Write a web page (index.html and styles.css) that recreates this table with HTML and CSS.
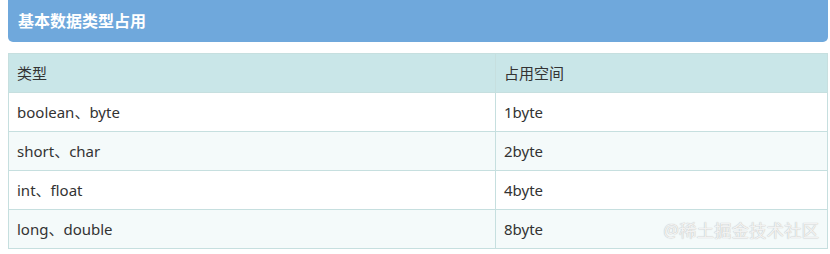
FILE: index.html
```html
<!DOCTYPE html>
<html lang="zh">
<head>
<meta charset="utf-8">
<link rel="stylesheet" href="styles.css">
</head>
<body>
<div class="page">
  <div class="title">基本数据类型占用</div>
  <table class="tbl">
    <thead>
      <tr><th class="c1">类型</th><th>占用空间</th></tr>
    </thead>
    <tbody>
      <tr><td>boolean、byte</td><td>1byte</td></tr>
      <tr class="alt"><td>short、char</td><td>2byte</td></tr>
      <tr><td>int、float</td><td>4byte</td></tr>
      <tr class="alt"><td>long、double</td><td>8byte</td></tr>
    </tbody>
  </table>
  <div class="wm">@稀土掘金技术社区</div>
</div>
</body>
</html>
```
FILE: styles.css
```css
html, body { margin: 0; padding: 0; background: #fff; }
body {
  font-family: "Noto Sans", "Noto Sans CJK SC", sans-serif;
  color: #333;
}
.page {
  position: relative;
  width: 820px;
  margin: 0 0 0 8px;
}
.title {
  height: 42px;
  box-sizing: border-box;
  background: #6fa8dc;
  border-radius: 0 0 5px 5px;
  color: #fff;
  font-weight: bold;
  font-size: 16px;
  line-height: 42px;
  padding-left: 10px;
  margin-bottom: 11px;
}
.tbl {
  width: 820px;
  border-collapse: collapse;
  font-size: 15px;
  table-layout: fixed;
}
.tbl th, .tbl td {
  border: 1px solid #c6dfdf;
  height: 39px;
  box-sizing: border-box;
  padding: 0 8px 1px;
  text-align: left;
  font-weight: normal;
  color: #333;
}
.tbl th { background: #c9e6e8; }
.tbl .c1 { width: 487px; }
.tbl tr.alt td { background: #f4fafa; }
.wm {
  position: absolute;
  right: 9px;
  top: 217px;
  font-size: 17.5px;
  color: #f2f2f2;
  text-shadow: 0 0 1px #aaa;
}
```
